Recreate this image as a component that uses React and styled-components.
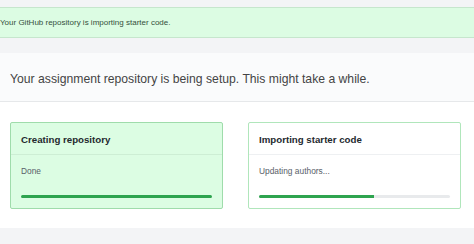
import React from "react";
import styled, { createGlobalStyle } from "styled-components";

const Global = createGlobalStyle`
  body {
    margin: 0;
    background: #ffffff;
    font-family: "Liberation Sans", Arial, sans-serif;
  }
`;

const Page = styled.div`
  width: 474px;
  height: 244px;
  overflow: hidden;
  display: flex;
  flex-direction: column;
  & > * {
    flex-shrink: 0;
  }
`;

const Strip = styled.div`
  height: ${(p) => p.h}px;
  background: #f3f4f6;
`;

const Flash = styled.div`
  height: 29px;
  display: flex;
  align-items: center;
  background: #dcfce3;
  border-top: 1px solid #c6e6cd;
  border-bottom: 1px solid #c6e6cd;
  color: #34503c;
  font-size: 8px;
  padding-left: 0;
`;

const Header = styled.div`
  height: 49px;
  display: flex;
  align-items: center;
  padding: 3px 0 0 10px;
  box-sizing: border-box;
  background: #fafbfc;
  border-bottom: 1px solid #e6e8ea;
  color: #444;
  font-size: 12.2px;
`;

const Cards = styled.div`
  display: grid;
  grid-template-columns: 213px 213px;
  column-gap: 25px;
  padding: 20px 10px 19px;
`;

const Card = styled.div`
  height: 87px;
  box-sizing: border-box;
  border: 1px solid ${(p) => (p.done ? "#9fdcab" : "#b0e6bb")};
  border-radius: 2px;
  background: ${(p) => (p.done ? "#dcfde3" : "#ffffff")};
  display: flex;
  flex-direction: column;
`;

const CardHead = styled.div`
  height: 32px;
  box-sizing: border-box;
  display: flex;
  align-items: center;
  padding: 1px 10px 0;
  border-bottom: 1px solid ${(p) => (p.done ? "#cdeed4" : "#eef0f2")};
  font-size: 9.7px;
  font-weight: bold;
  color: #24292e;
`;

const CardBody = styled.div`
  flex: 1;
  padding: 10px 10px 0;
  display: flex;
  flex-direction: column;
`;

const Status = styled.div`
  font-size: 8.4px;
  line-height: 12px;
  color: #586069;
`;

const Track = styled.div`
  margin-top: 18px;
  height: 3px;
  border-radius: 2px;
  background: ${(p) => (p.done ? "#2ea44f" : "#e8eaec")};
  overflow: hidden;
`;

const Fill = styled.div`
  height: 100%;
  background: #2ea44f;
`;

const steps = [
  { title: "Creating repository", status: "Done", pct: 100, done: true },
  { title: "Importing starter code", status: "Updating authors...", pct: 60, done: false },
];

export default function App() {
  return (
    <Page>
      <Global />
      <Strip h={7} />
      <Flash>Your GitHub repository is importing starter code.</Flash>
      <Strip h={15} />
      <Header>Your assignment repository is being setup. This might take a while.</Header>
      <Cards>
        {steps.map((s) => (
          <Card key={s.title} done={s.done}>
            <CardHead done={s.done}>{s.title}</CardHead>
            <CardBody>
              <Status>{s.status}</Status>
              <Track done={s.done}>
                <Fill style={{ width: `${s.pct}%` }} />
              </Track>
            </CardBody>
          </Card>
        ))}
      </Cards>
      <Strip h={20} />
    </Page>
  );
}
